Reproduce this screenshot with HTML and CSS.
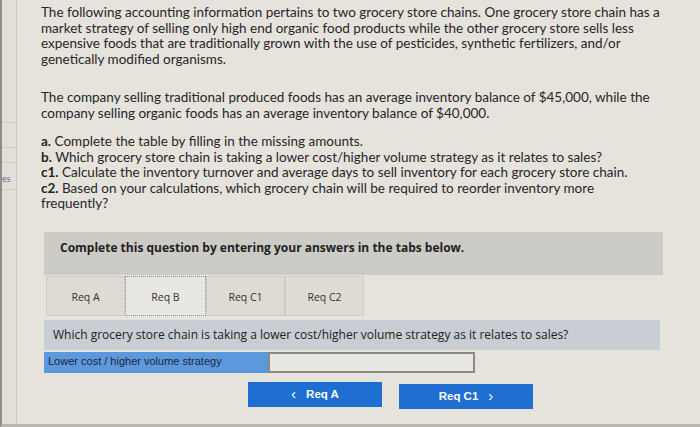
FILE: index.html
```html
<!DOCTYPE html>
<html>
<head>
<meta charset="utf-8">
<link rel="stylesheet" href="styles.css">
</head>
<body>
<div class="page">
  <aside class="side">
    <div class="side-box"></div>
    <div class="side-box short"></div>
    <div class="side-box last"><span>es</span></div>
  </aside>
  <main class="main">
    <p class="para">The following accounting information pertains to two grocery store chains. One grocery store chain has a market strategy of selling only high end organic food products while the other grocery store sells less expensive foods that are traditionally grown with the use of pesticides, synthetic fertilizers, and/or genetically modified organisms.</p>
    <p class="para second">The company selling traditional produced foods has an average inventory balance of $45,000, while the company selling organic foods has an average inventory balance of $40,000.</p>
    <div class="para list">
      <div class="item"><b>a.</b> Complete the table by filling in the missing amounts.</div>
      <div class="item"><b>b.</b> Which grocery store chain is taking a lower cost/higher volume strategy as it relates to sales?</div>
      <div class="item"><b>c1.</b> Calculate the inventory turnover and average days to sell inventory for each grocery store chain.</div>
      <div class="item"><b>c2.</b> Based on your calculations, which grocery chain will be required to reorder inventory more</div>
      <div class="item">frequently?</div>
    </div>
    <section class="work">
      <div class="banner">Complete this question by entering your answers in the tabs below.</div>
      <div class="tabs">
        <div class="tab">Req A</div>
        <div class="tab active">Req B</div>
        <div class="tab">Req C1</div>
        <div class="tab">Req C2</div>
      </div>
      <div class="prompt">Which grocery store chain is taking a lower cost/higher volume strategy as it relates to sales?</div>
      <div class="answer">
        <div class="label">Lower cost / higher volume strategy</div>
        <div class="input"></div>
      </div>
      <div class="nav">
        <div class="btn prev"><span class="chev">&lsaquo;</span> Req A</div>
        <div class="btn next">Req C1 <span class="chev">&rsaquo;</span></div>
      </div>
    </section>
  </main>
</div>
</body>
</html>
```
FILE: styles.css
```css
html, body {
  margin: 0;
  padding: 0;
}
body {
  width: 700px;
  height: 427px;
  overflow: hidden;
  background: #e6e3dc;
  font-family: Lato, "Liberation Sans", sans-serif;
  color: #262626;
}
.page {
  display: flex;
  height: 424px;
  border-bottom: 3px solid #b9b7b2;
  border-left: 2px solid #8e8d8a;
}
.side {
  width: 14px;
  flex: none;
  border-right: 1px solid #cfcdc7;
  padding-top: 122px;
  background: #e2dfd8;
}
.side-box {
  height: 24px;
  border-top: 1px solid #d0cec8;
}
.side-box.short {
  height: 14px;
}
.side-box.last {
  height: 26px;
  border-bottom: 1px solid #d0cec8;
  position: relative;
}
.side-box span {
  position: absolute;
  left: 0;
  top: 10px;
  font-size: 9px;
  color: #5a6a8a;
}
.main {
  flex: 1;
  padding: 5px 0 0 24px;
}
.para {
  margin: 0 0 23px 0;
  font-size: 13.5px;
  line-height: 15.5px;
  width: 622px;
}
.para.second {
  margin-bottom: 13px;
}
.para b {
  font-weight: 700;
}
.list {
  width: 620px;
  margin-bottom: 20px;
}
.item {
  white-space: nowrap;
}
.work {
  margin-left: 3px;
  width: 619px;
}
.banner {
  background: #cdcbc6;
  height: 43px;
  box-sizing: border-box;
  padding: 7px 0 0 16px;
  font-family: "Open Sans", "DejaVu Sans", sans-serif;
  font-weight: 700;
  font-size: 12px;
  color: #222;
}
.tabs {
  display: flex;
  padding-left: 2px;
  margin-top: 1px;
}
.tab {
  width: 79px;
  height: 40px;
  box-sizing: border-box;
  border: 1px solid #cdcbc5;
  background: #dedbd4;
  display: flex;
  align-items: center;
  justify-content: center;
  font-family: "Open Sans", "DejaVu Sans", sans-serif;
  font-size: 10.5px;
  color: #333;
  padding-top: 3px;
}
.tab.active {
  background: #e9e7e1;
  border: 1px dotted #7d8aa0;
  width: 81px;
}
.prompt {
  margin-top: 4px;
  height: 30px;
  background: #c8ced3;
  box-sizing: border-box;
  padding: 6px 0 0 9px;
  font-family: "Open Sans", "DejaVu Sans", sans-serif;
  font-size: 12px;
  color: #222;
  width: 616px;
}
.answer {
  display: flex;
  margin-top: 2px;
  height: 21px;
}
.label {
  width: 224px;
  background: #5d98dd;
  font-family: "Liberation Sans", Arial, sans-serif;
  font-size: 11px;
  color: #1c2838;
  padding: 3px 0 0 4px;
  box-sizing: border-box;
}
.input {
  width: 207px;
  box-sizing: border-box;
  border: 2px solid #8b8985;
  background: #e9e7e2;
}
.nav {
  display: flex;
  margin-top: 9px;
  padding-left: 204px;
  gap: 17px;
}
.btn {
  width: 134px;
  height: 25px;
  background: #1f6ed1;
  color: #fff;
  font-family: "Liberation Sans", Arial, sans-serif;
  font-weight: 700;
  font-size: 11.5px;
  display: flex;
  align-items: center;
  justify-content: center;
  gap: 10px;
}
.btn.next {
  margin-top: 2px;
}
.chev {
  font-size: 15px;
  line-height: 1;
  font-weight: 400;
  position: relative;
  top: -1px;
}
```
